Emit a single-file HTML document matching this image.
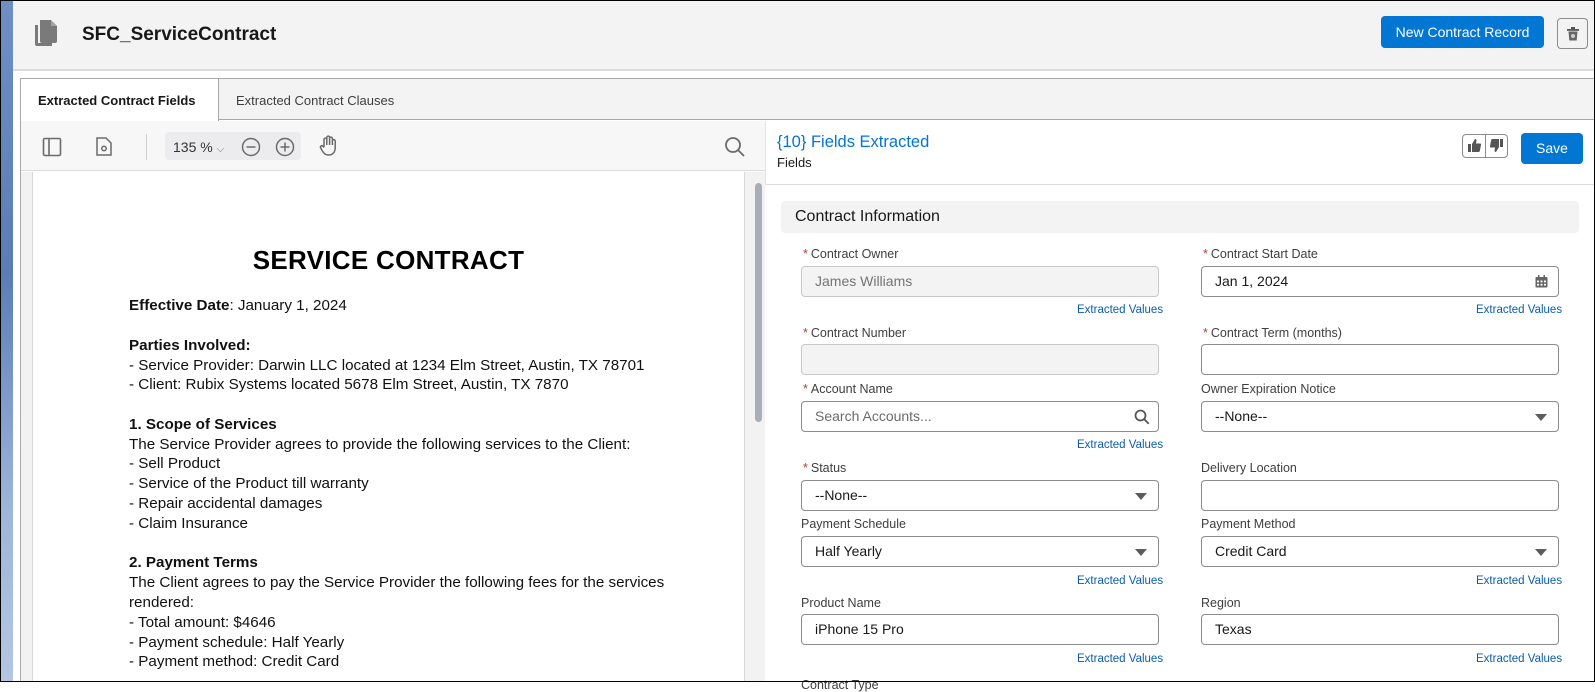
<!DOCTYPE html>
<html><head><meta charset="utf-8"><style>
*{box-sizing:border-box;margin:0;padding:0}
body{width:1595px;height:682px;overflow:hidden;position:relative;background:#fff;font-family:"Liberation Sans",Arial,sans-serif;color:#181818}
.a{position:absolute}
.frame{position:absolute;left:0;top:0;width:1595px;height:682px;border:1px solid #000;z-index:50;pointer-events:none}
.lbl{position:absolute;font-size:12.5px;color:#3e3e3c;white-space:nowrap}
.lbl b{color:#c23934;font-weight:normal;margin-right:3px}
.in{position:absolute;height:31px;border:1px solid #8c8c8c;border-radius:4px;background:#fff;font-size:14px;padding-left:13px;line-height:29px;color:#181818}
.in.g{background:#f3f3f3;border-color:#c9c9c9;color:#747474}
.ev{position:absolute;font-size:11.5px;color:#0b5cab;white-space:nowrap}
.caret{position:absolute;right:11px;top:12px;width:0;height:0;border-left:6px solid transparent;border-right:6px solid transparent;border-top:7px solid #5c5c5c}
.pt{position:absolute;left:129px;font-size:15.2px;color:#111;white-space:nowrap;line-height:20px}
</style></head><body>
<div class="frame"></div>
<div class="a" style="left:0;top:0;width:13px;height:682px;background:linear-gradient(180deg,#6f8fc4,#5a7db8 40%,#9fb6da 75%,#b4c6e2)"></div>
<div class="a" style="left:13px;top:0;width:1582px;height:71px;background:#f3f3f3;border-bottom:2px solid #dcdcdc"></div>
<svg class="a" style="left:31px;top:17px" width="30" height="32" viewBox="0 0 30 32"><path d="M4 8h3v18h14v3H6a2 2 0 0 1-2-2z" fill="#7a7a7a"/><path d="M9 3h11l6 6v15a2 2 0 0 1-2 2H11a2 2 0 0 1-2-2z" fill="#7a7a7a"/><path d="M20 3v6h6" fill="#a5a5a5"/></svg>
<div class="a" style="left:82px;top:24px;font-size:19px;font-weight:bold;color:#181818">SFC_ServiceContract</div>
<div class="a" style="left:1381px;top:16px;width:163px;height:32px;background:#0176d3;border-radius:4px;color:#fff;font-size:14px;text-align:center;line-height:32px">New Contract Record</div>
<div class="a" style="left:1557px;top:18px;width:31px;height:31px;border:1px solid #8c8c8c;border-radius:4px;background:#f3f3f3"><svg style="position:absolute;left:8px;top:7px" width="14" height="16" viewBox="0 0 14 16"><rect x="1" y="3" width="12" height="1.8" fill="#555"/><rect x="5" y="1" width="4" height="2" fill="#555"/><path d="M2.5 5.5h9l-.8 9h-7.4z" fill="#666"/><circle cx="7" cy="10" r="2" fill="#ccc"/></svg></div>
<div class="a" style="left:20px;top:78px;width:1575px;height:604px;border:1px solid #a8a8a8;border-right:none;border-bottom:none;background:#fff"></div>
<div class="a" style="left:21px;top:79px;width:1574px;height:41px;background:#f3f3f3;border-bottom:1px solid #a8a8a8"></div>
<div class="a" style="left:21px;top:79px;width:198px;height:42px;background:#fff;border-right:1px solid #a8a8a8"></div>
<div class="a" style="left:38px;top:93px;font-size:13px;font-weight:bold">Extracted Contract Fields</div>
<div class="a" style="left:236px;top:93px;font-size:13px;color:#3e3e3c">Extracted Contract Clauses</div>
<div class="a" style="left:21px;top:121px;width:744px;height:50px;background:#f7f7f8;border-bottom:1px solid #dcdcdc"></div>
<svg class="a" style="left:42px;top:137px" width="20" height="20" viewBox="0 0 20 20" fill="none" stroke="#6b6b6b" stroke-width="1.6"><rect x="1.5" y="1.5" width="17" height="17" rx="1.5"/><path d="M7 2v16"/></svg>
<svg class="a" style="left:95px;top:136px" width="18" height="21" viewBox="0 0 18 21" fill="none" stroke="#6b6b6b" stroke-width="1.5"><path d="M2 2h9l5 5v12H2z"/><circle cx="9" cy="12.5" r="2.2"/></svg>
<div class="a" style="left:146px;top:134px;width:1px;height:26px;background:#d0d0d0"></div>
<div class="a" style="left:165px;top:132px;width:136px;height:28px;background:#ececee;border-radius:4px"></div>
<div class="a" style="left:173px;top:139px;font-size:14px;color:#333">135 % <span style="font-size:10px;color:#777">⌵</span></div>
<svg class="a" style="left:238px;top:135px" width="64" height="24" viewBox="0 0 64 24" fill="none" stroke="#6b6b6b" stroke-width="1.5"><circle cx="13" cy="12" r="8.5"/><path d="M8.5 12h9"/><circle cx="47" cy="12" r="8.5"/><path d="M42.5 12h9M47 7.5v9"/></svg>
<svg class="a" style="left:318px;top:134px" width="22" height="24" viewBox="0 0 22 24" fill="none" stroke="#6b6b6b" stroke-width="1.5" stroke-linejoin="round"><path d="M6 13V5.5a1.4 1.4 0 0 1 2.8 0V11M8.8 11V3.5a1.4 1.4 0 0 1 2.8 0V11M11.6 11V4.5a1.4 1.4 0 0 1 2.8 0V11M14.4 11V7a1.4 1.4 0 0 1 2.8 0v7c0 4-2.5 7-6.5 7C7 21 5.5 19 3.5 15.5L2.5 13.5a1.4 1.4 0 0 1 2.3-1.4L6 13.5"/></svg>
<svg class="a" style="left:723px;top:135px" width="24" height="24" viewBox="0 0 24 24" fill="none" stroke="#6b6b6b" stroke-width="1.8"><circle cx="10" cy="10" r="7"/><path d="M15 15l6 6"/></svg>
<div class="a" style="left:21px;top:172px;width:744px;height:510px;background:#f2f2f3"></div>
<div class="a" style="left:32px;top:172px;width:713px;height:510px;background:#fff;border-left:1px solid #d8d8d8;border-right:1px solid #d8d8d8"></div>
<div class="a" style="left:755px;top:183px;width:7px;height:239px;background:#a9afb6;border-radius:4px"></div>
<div class="a" style="left:32px;top:245px;text-align:center;width:713px;font-size:26px;font-weight:bold;color:#000;letter-spacing:0.3px">SERVICE CONTRACT</div>
<div class="pt" style="top:296px"><b>Effective Date</b>: January 1, 2024</div>
<div class="pt" style="top:336px"><b>Parties Involved:</b></div>
<div class="pt" style="top:356px">- Service Provider: Darwin LLC located at 1234 Elm Street, Austin, TX 78701</div>
<div class="pt" style="top:375px">- Client: Rubix Systems located 5678 Elm Street, Austin, TX 7870</div>
<div class="pt" style="top:415px"><b>1. Scope of Services</b></div>
<div class="pt" style="top:435px">The Service Provider agrees to provide the following services to the Client:</div>
<div class="pt" style="top:454px">- Sell Product</div>
<div class="pt" style="top:474px">- Service of the Product till warranty</div>
<div class="pt" style="top:494px">- Repair accidental damages</div>
<div class="pt" style="top:514px">- Claim Insurance</div>
<div class="pt" style="top:553px"><b>2. Payment Terms</b></div>
<div class="pt" style="top:573px">The Client agrees to pay the Service Provider the following fees for the services</div>
<div class="pt" style="top:593px">rendered:</div>
<div class="pt" style="top:613px">- Total amount: $4646</div>
<div class="pt" style="top:633px">- Payment schedule: Half Yearly</div>
<div class="pt" style="top:652px">- Payment method: Credit Card</div>
<div class="a" style="left:765px;top:121px;width:830px;height:64px;border-bottom:1px solid #dcdcdc;border-left:1px solid #e5e5e5"></div>
<div class="a" style="left:777px;top:133px;font-size:16.5px;color:#0176d3">{10} Fields Extracted</div>
<div class="a" style="left:777px;top:155px;font-size:13px;color:#181818">Fields</div>
<div class="a" style="left:1462px;top:134px;width:46px;height:24px;border:1px solid #8c8c8c;border-radius:4px;background:#fff"><div style="position:absolute;left:22px;top:0;width:1px;height:22px;background:#8c8c8c"></div>
<svg style="position:absolute;left:4px;top:3px" width="15" height="15" viewBox="0 0 15 15" fill="#555"><rect x="1" y="6" width="3" height="8"/><path d="M5 6l3-5c1.2 0 1.7.8 1.4 2L9 5.5h4a1 1 0 0 1 1 1.2l-1.2 6.3a1.2 1.2 0 0 1-1.2 1H5z"/></svg>
<svg style="position:absolute;left:26px;top:3px" width="15" height="15" viewBox="0 0 15 15" fill="#555"><rect x="11" y="1" width="3" height="8"/><path d="M10 9l-3 5c-1.2 0-1.7-.8-1.4-2L6 9.5H2a1 1 0 0 1-1-1.2L2.2 2a1.2 1.2 0 0 1 1.2-1H10z"/></svg></div>
<div class="a" style="left:1521px;top:133px;width:62px;height:31px;background:#0176d3;border-radius:4px;color:#fff;font-size:14px;text-align:center;line-height:31px">Save</div>
<div class="a" style="left:781px;top:201px;width:798px;height:32px;background:#f3f3f3;border-radius:4px;font-size:16px;line-height:32px;padding-left:14px;color:#181818">Contract Information</div>
<div class="lbl" style="left:803px;top:247px"><b>*</b>Contract Owner</div>
<div class="in g" style="left:801px;top:266px;width:358px">James Williams</div>
<div class="ev" style="left:1077px;top:304px">Extracted Values</div>
<div class="lbl" style="left:1203px;top:247px"><b>*</b>Contract Start Date</div>
<div class="in" style="left:1201px;top:266px;width:358px">Jan 1, 2024<svg style="position:absolute;right:10px;top:8px" width="13" height="13" viewBox="0 0 13 13" fill="#666"><rect x="0.5" y="2" width="12" height="10.5" rx="1"/><rect x="3" y="0" width="1.5" height="3"/><rect x="8.5" y="0" width="1.5" height="3"/><g fill="#fff"><rect x="2" y="5.5" width="2" height="1.8"/><rect x="5.5" y="5.5" width="2" height="1.8"/><rect x="9" y="5.5" width="2" height="1.8"/><rect x="2" y="8.8" width="2" height="1.8"/><rect x="5.5" y="8.8" width="2" height="1.8"/><rect x="9" y="8.8" width="2" height="1.8"/></g></svg></div>
<div class="ev" style="left:1476px;top:304px">Extracted Values</div>
<div class="lbl" style="left:803px;top:326px"><b>*</b>Contract Number</div>
<div class="in g" style="left:801px;top:344px;width:358px"></div>
<div class="lbl" style="left:1203px;top:326px"><b>*</b>Contract Term (months)</div>
<div class="in" style="left:1201px;top:344px;width:358px"></div>
<div class="lbl" style="left:803px;top:382px"><b>*</b>Account Name</div>
<div class="in" style="left:801px;top:401px;width:358px;color:#6b6b6b">Search Accounts...<svg style="position:absolute;right:8px;top:7px" width="16" height="16" viewBox="0 0 16 16" fill="none" stroke="#555" stroke-width="1.8"><circle cx="6.5" cy="6.5" r="5"/><path d="M10.2 10.2l4.5 4.5"/></svg></div>
<div class="ev" style="left:1077px;top:439px">Extracted Values</div>
<div class="lbl" style="left:1201px;top:382px">Owner Expiration Notice</div>
<div class="in" style="left:1201px;top:401px;width:358px">--None--<div class="caret"></div></div>
<div class="lbl" style="left:803px;top:461px"><b>*</b>Status</div>
<div class="in" style="left:801px;top:480px;width:358px">--None--<div class="caret"></div></div>
<div class="lbl" style="left:1201px;top:461px">Delivery Location</div>
<div class="in" style="left:1201px;top:480px;width:358px"></div>
<div class="lbl" style="left:801px;top:517px">Payment Schedule</div>
<div class="in" style="left:801px;top:536px;width:358px">Half Yearly<div class="caret"></div></div>
<div class="ev" style="left:1077px;top:575px">Extracted Values</div>
<div class="lbl" style="left:1201px;top:517px">Payment Method</div>
<div class="in" style="left:1201px;top:536px;width:358px">Credit Card<div class="caret"></div></div>
<div class="ev" style="left:1476px;top:575px">Extracted Values</div>
<div class="lbl" style="left:801px;top:596px">Product Name</div>
<div class="in" style="left:801px;top:614px;width:358px">iPhone 15 Pro</div>
<div class="ev" style="left:1077px;top:653px">Extracted Values</div>
<div class="lbl" style="left:1201px;top:596px">Region</div>
<div class="in" style="left:1201px;top:614px;width:358px">Texas</div>
<div class="ev" style="left:1476px;top:653px">Extracted Values</div>
<div class="lbl" style="left:801px;top:678px">Contract Type</div>
</body></html>
